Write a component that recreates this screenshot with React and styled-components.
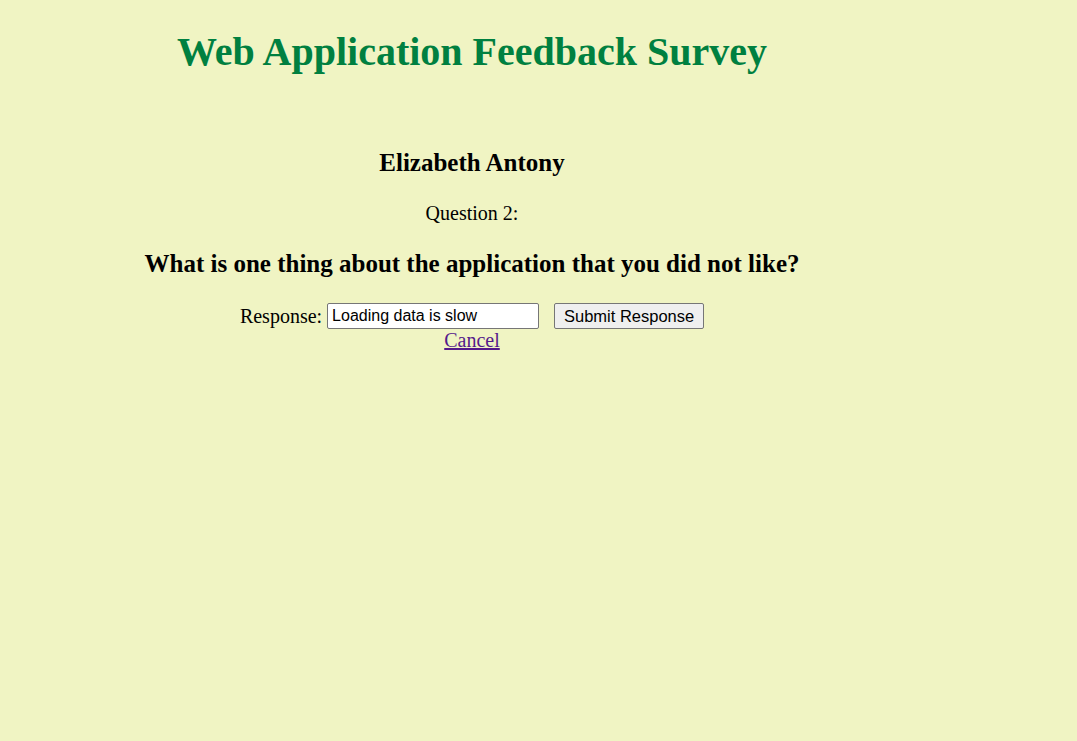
import React from 'react';
import styled, { createGlobalStyle } from 'styled-components';

const GlobalStyle = createGlobalStyle`
  html, body {
    background-color: #f0f4c3;
  }
  body {
    margin: 8px;
    font-family: "Liberation Serif", "Times New Roman", serif;
    font-size: 20px;
    color: #000;
  }
`;

const Page = styled.div`
  width: 928px;
  text-align: center;
`;

const Title = styled.h1`
  margin: 20px 0 0 0;
  font-size: 40px;
  font-weight: bold;
  color: #008040;
`;

const Panel = styled.div`
  margin-top: 74px;
`;

const UserName = styled.h2`
  margin: 0;
  font-size: 25px;
  font-weight: bold;
`;

const QuestionNumber = styled.p`
  margin: 25px 0 0 0;
  font-size: 20px;
`;

const QuestionText = styled.h2`
  margin: 25px 0 0 0;
  font-size: 25px;
  font-weight: bold;
`;

const Form = styled.form`
  margin-top: 25px;
  display: flex;
  flex-direction: column;
  align-items: center;
`;

const Row = styled.div`
  display: flex;
  align-items: center;
  justify-content: center;
`;

const Label = styled.label`
  font-size: 20px;
  margin-right: 5px;
`;

const TextInput = styled.input`
  width: 212px;
  height: 26px;
  box-sizing: border-box;
  padding: 1px 4px;
  font-family: "Liberation Sans", Arial, sans-serif;
  font-size: 16px;
  color: #000;
  background: #fff;
  border: 1px solid #767676;
  border-radius: 2px;
  margin-right: 15px;
`;

const SubmitButton = styled.button`
  height: 26px;
  width: 150px;
  box-sizing: border-box;
  padding: 1px 4px;
  font-family: "Liberation Sans", Arial, sans-serif;
  font-size: 16.5px;
  color: #000;
  background: #efefef;
  border: 1px solid #767676;
  border-radius: 2px;
`;

const CancelLink = styled.a`
  font-size: 20px;
  color: #551a8b;
  text-decoration: underline;
  line-height: 23px;
`;

const App = () => {
  return (
    <Page>
      <GlobalStyle />
      <Title>Web Application Feedback Survey</Title>
      <Panel>
        <UserName>Elizabeth Antony</UserName>
        <QuestionNumber>Question 2:</QuestionNumber>
        <QuestionText>
          What is one thing about the application that you did not like?
        </QuestionText>
        <Form onSubmit={(e) => e.preventDefault()}>
          <Row>
            <Label htmlFor="response">Response:</Label>
            <TextInput
              id="response"
              type="text"
              defaultValue="Loading data is slow"
            />
            <SubmitButton type="submit">Submit Response</SubmitButton>
          </Row>
          <CancelLink href="#">Cancel</CancelLink>
        </Form>
      </Panel>
    </Page>
  );
};

export default App;
